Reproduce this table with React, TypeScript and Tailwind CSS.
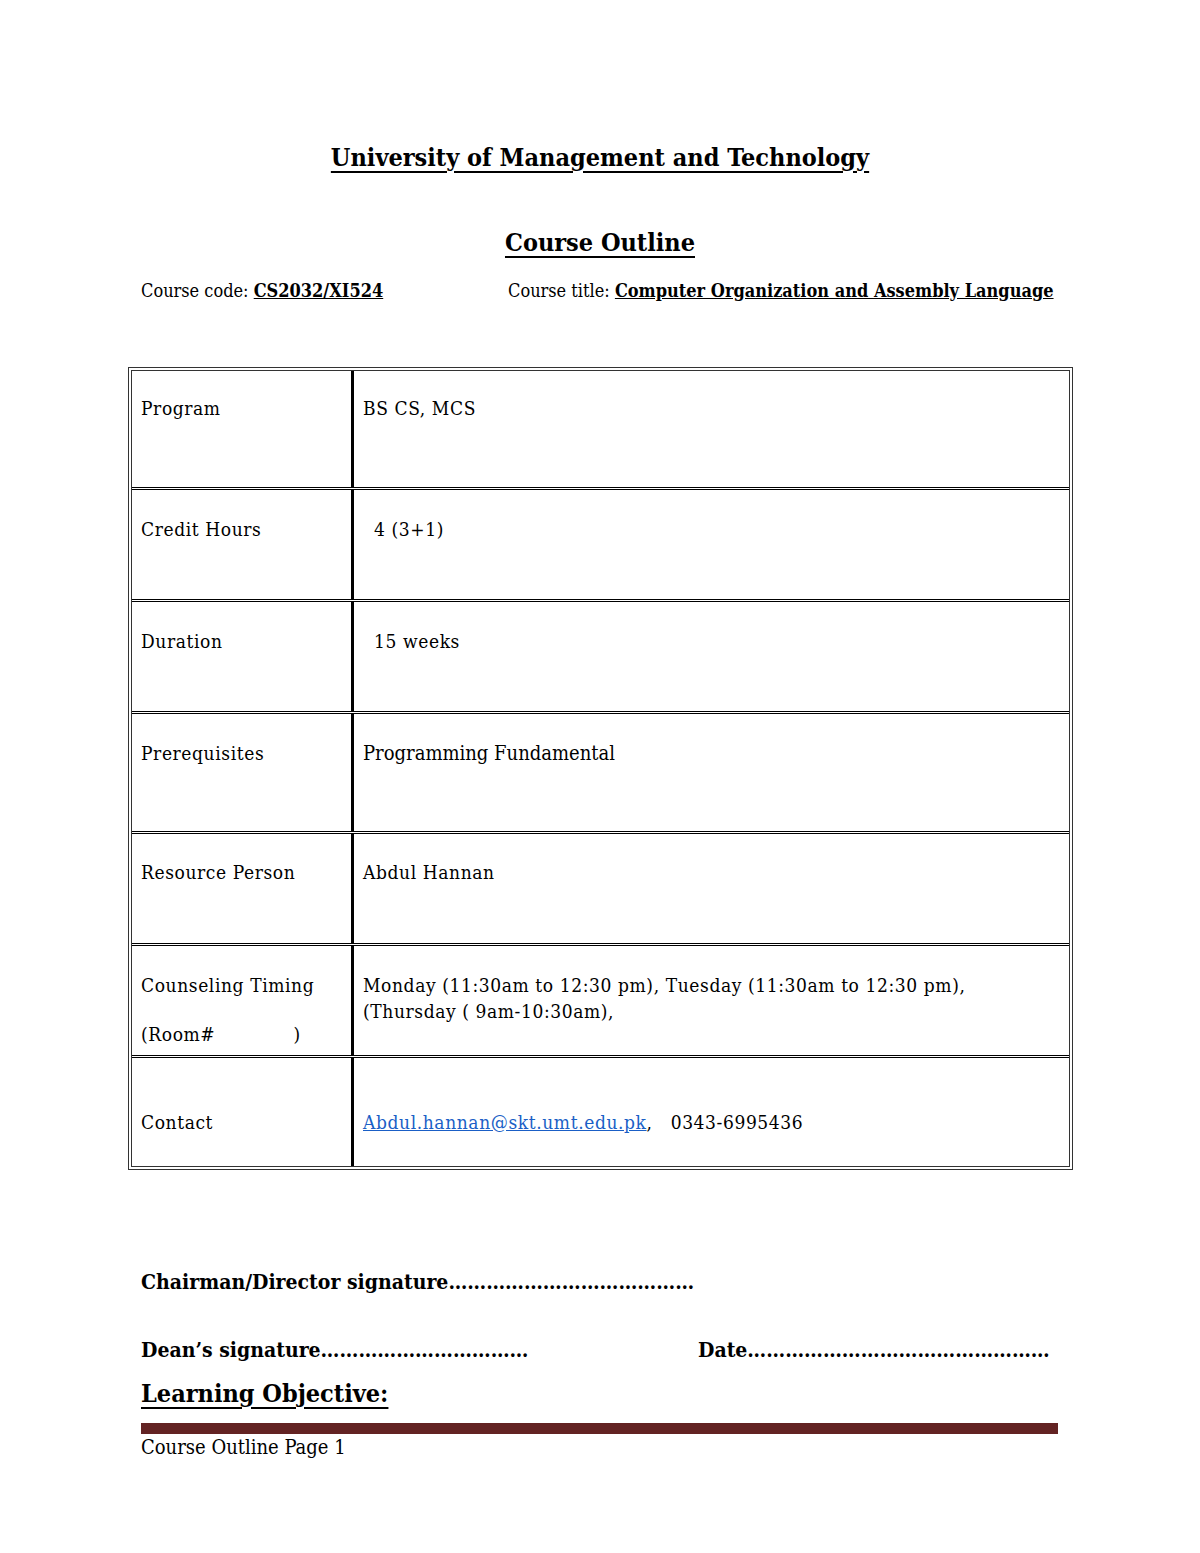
const font = { fontFamily: '"DejaVu Serif Condensed", "DejaVu Serif", serif' };

interface Row {
  label: React.ReactNode;
  value: React.ReactNode;
  height: string;
  pad: string;
}

const rows: Row[] = [
  { label: "Program", value: "BS CS, MCS", height: "h-[119px]", pad: "pt-[24px]" },
  { label: "Credit Hours", value: <span className="pl-[11px]">4 (3+1)</span>, height: "h-[112px]", pad: "pt-[26px]" },
  { label: "Duration", value: <span className="pl-[11px]">15 weeks</span>, height: "h-[112px]", pad: "pt-[26px]" },
  {
    label: "Prerequisites",
    value: <span className="text-[20px] tracking-normal leading-[26px] block">Programming Fundamental</span>,
    height: "h-[120px]",
    pad: "pt-[26px]",
  },
  { label: "Resource Person", value: "Abdul Hannan", height: "h-[112px]", pad: "pt-[25px]" },
  {
    label: (
      <>
        <div>Counseling Timing</div>
        <div className="mt-[23px]">(Room#&nbsp;&nbsp;&nbsp;&nbsp;&nbsp;&nbsp;&nbsp;&nbsp;&nbsp;&nbsp;&nbsp;&nbsp;&nbsp;)</div>
      </>
    ),
    value: (
      <>
        <div>Monday (11:30am to 12:30 pm), Tuesday (11:30am to 12:30 pm),</div>
        <div>(Thursday ( 9am-10:30am),</div>
      </>
    ),
    height: "h-[112px]",
    pad: "pt-[26px]",
  },
  {
    label: "Contact",
    value: (
      <>
        <span className="text-[#1a5fc6] underline">Abdul.hannan@skt.umt.edu.pk</span>,&nbsp;&nbsp; 0343-6995436
      </>
    ),
    height: "h-[108px]",
    pad: "pt-[51px]",
  },
];

export default function App() {
  return (
    <div className="w-[1200px] h-[1553px] bg-white text-black" style={font}>
      <div className="pt-[142px] text-center">
        <h1 className="text-[25px] leading-[32px] font-bold underline underline-offset-[5px]">
          University of Management and Technology
        </h1>
        <h2 className="mt-[53px] text-[25px] leading-[32px] font-bold underline underline-offset-[5px]">
          Course Outline
        </h2>
      </div>

      <div className="mt-[20px] flex text-[18px] leading-[24px]">
        <div className="pl-[141px] w-[508px]">
          Course code: <span className="font-bold underline">CS2032/XI524</span>
        </div>
        <div>
          Course title: <span className="font-bold underline">Computer Organization and Assembly Language</span>
        </div>
      </div>

      <div className="ml-[128px] mt-[64px] w-[945px] border-4 border-double border-[#333] text-[19px] leading-[26px] tracking-[0.6px]">
        {rows.map((r, i) => (
          <div
            key={i}
            className={`flex ${r.height} ${i < rows.length - 1 ? "border-b-[3px] border-double border-black" : ""}`}
          >
            <div className={`w-[222px] pl-[9px] border-r-[3px] border-black ${r.pad}`}>{r.label}</div>
            <div className={`flex-1 pl-[9px] ${r.pad}`}>{r.value}</div>
          </div>
        ))}
      </div>

      <div className="pl-[141px] text-[21px] leading-[28px] font-bold">
        <div className="mt-[98px]">Chairman/Director signature…………………………………</div>
        <div className="mt-[40px] flex">
          <div className="w-[557px]">Dean’s signature……………………………</div>
          <div>Date…………………………………………</div>
        </div>
      </div>

      <div className="pl-[141px] mt-[14px] text-[25px] leading-[32px] font-bold underline underline-offset-[5px]">
        Learning Objective:
      </div>

      <div className="ml-[141px] mt-[13px] w-[917px] h-[11px] bg-[#632323]" />
      <div className="pl-[141px] mt-[1px] text-[20px] leading-[24px]">Course Outline Page 1</div>
    </div>
  );
}
